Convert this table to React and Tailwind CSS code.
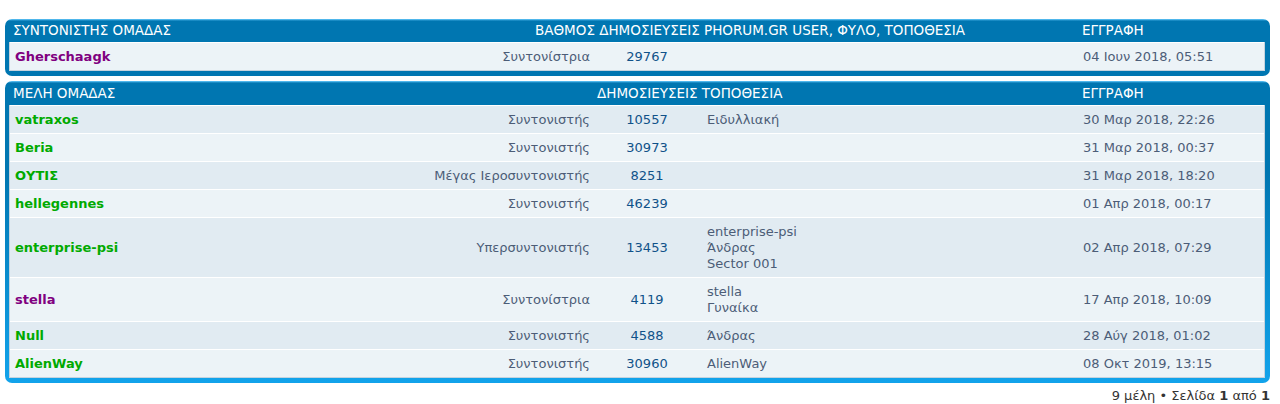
const GREEN = 'text-[#00aa00]';
const PURPLE = 'text-[#800080]';

const leader = {
  name: 'Gherschaagk',
  color: PURPLE,
  rank: 'Συντονίστρια',
  posts: '29767',
  location: [],
  joined: '04 Ιουν 2018, 05:51'
};

const members = [
  { name: 'vatraxos', color: GREEN, rank: 'Συντονιστής', posts: '10557', location: ['Ειδυλλιακή'], joined: '30 Μαρ 2018, 22:26' },
  { name: 'Beria', color: GREEN, rank: 'Συντονιστής', posts: '30973', location: [], joined: '31 Μαρ 2018, 00:37' },
  { name: 'ΟΥΤΙΣ', color: GREEN, rank: 'Μέγας Ιεροσυντονιστής', posts: '8251', location: [], joined: '31 Μαρ 2018, 18:20' },
  { name: 'hellegennes', color: GREEN, rank: 'Συντονιστής', posts: '46239', location: [], joined: '01 Απρ 2018, 00:17' },
  { name: 'enterprise-psi', color: GREEN, rank: 'Υπερσυντονιστής', posts: '13453', location: ['enterprise-psi', 'Άνδρας', 'Sector 001'], joined: '02 Απρ 2018, 07:29' },
  { name: 'stella', color: PURPLE, rank: 'Συντονίστρια', posts: '4119', location: ['stella', 'Γυναίκα'], joined: '17 Απρ 2018, 10:09' },
  { name: 'Null', color: GREEN, rank: 'Συντονιστής', posts: '4588', location: ['Άνδρας'], joined: '28 Αύγ 2018, 01:02' },
  { name: 'AlienWay', color: GREEN, rank: 'Συντονιστής', posts: '30960', location: ['AlienWay'], joined: '08 Οκτ 2019, 13:15' }
];

function MemberRow({ m, alt }) {
  return (
    <div
      className={`flex items-center border-t border-white py-[5.5px] leading-[16px] ${
        alt ? 'bg-[#e1ebf2]' : 'bg-[#ecf3f7]'
      }`}
    >
      <div className={`w-[330px] pl-[5px] font-bold ${m.color}`}>{m.name}</div>
      <div className="w-[256px] pr-[6px] text-right text-[#4c5d77]">{m.rank}</div>
      <div className="w-[102px] text-center text-[#105289]">{m.posts}</div>
      <div className="w-[379px] pl-[9px] text-[#4c5d77]">
        {m.location.map((l) => (
          <div key={l}>{l}</div>
        ))}
      </div>
      <div className="flex-1 pl-[6px] text-[#4c5d77]">{m.joined}</div>
    </div>
  );
}

function Box({ children, header }) {
  return (
    <div className="rounded-[7px] bg-[linear-gradient(to_bottom,#6acdff_0px,#0076b1_2px,#0076b1_92px,#12a3eb_100%)] px-[4px] pb-[5px] pr-[5px]">
      {header}
      <div className="border-x border-b border-[#c5d3de]">{children}</div>
    </div>
  );
}

export default function App() {
  return (
    <div className="bg-white pl-[5px] pr-[10px] pt-[19px] font-['DejaVu_Sans',Verdana,sans-serif] text-[13px]">
      <Box
        header={
          <div className="flex h-[23px] items-center text-[13.5px] uppercase text-white">
            <div className="w-[526px] pl-[4px]">ΣΥΝΤΟΝΙΣΤΗΣ ΟΜΑΔΑΣ</div>
            <div className="w-[541px]">ΒΑΘΜΟΣ ΔΗΜΟΣΙΕΥΣΕΙΣ PHORUM.GR USER, ΦΥΛΟ, ΤΟΠΟΘΕΣΙΑ</div>
            <div className="flex-1 pl-[6px]">ΕΓΓΡΑΦΗ</div>
          </div>
        }
      >
        <MemberRow m={leader} alt={false} />
      </Box>

      <div className="h-[5px]" />

      <Box
        header={
          <div className="flex h-[24px] items-center text-[13.5px] uppercase text-white">
            <div className="w-[588px] pl-[4px]">ΜΕΛΗ ΟΜΑΔΑΣ</div>
            <div className="w-[479px]">ΔΗΜΟΣΙΕΥΣΕΙΣ ΤΟΠΟΘΕΣΙΑ</div>
            <div className="flex-1 pl-[6px]">ΕΓΓΡΑΦΗ</div>
          </div>
        }
      >
        {members.map((m, i) => (
          <MemberRow key={m.name} m={m} alt={i % 2 === 0} />
        ))}
      </Box>

      <div className="pt-[5px] text-right leading-[16px] text-[#333333]">
        9 μέλη • Σελίδα <strong>1</strong> από <strong>1</strong>
      </div>
    </div>
  );
}
